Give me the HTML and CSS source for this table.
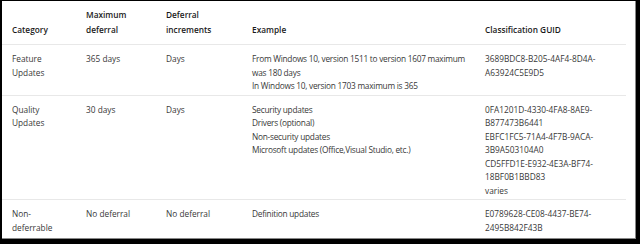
FILE: index.html
```html
<!DOCTYPE html>
<html lang="en">
  <head>
    <meta charset="UTF-8" />
    <title>Deferral policies</title>
    <link rel="stylesheet" href="styles.css">
  </head>
  <body>
    <div class="panel">
      <table class="deferral-table">
        <colgroup>
          <col class="col-category" />
          <col class="col-max" />
          <col class="col-incr" />
          <col class="col-example" />
          <col class="col-guid" />
        </colgroup>
        <thead>
          <tr>
            <th>Category</th>
            <th>Maximum deferral</th>
            <th>Deferral increments</th>
            <th>Example</th>
            <th>Classification GUID</th>
          </tr>
        </thead>
        <tbody>
          <tr>
            <td>Feature Updates</td>
            <td>365 days</td>
            <td>Days</td>
            <td class="example">
              From Windows 10, version 1511 to version 1607 maximum<br />
              was 180 days<br />
              In Windows 10, version 1703 maximum is 365
            </td>
            <td>3689BDC8-B205-4AF4-8D4A-A63924C5E9D5</td>
          </tr>
          <tr>
            <td>Quality Updates</td>
            <td>30 days</td>
            <td>Days</td>
            <td class="example">
              Security updates<br />
              Drivers (optional)<br />
              Non-security updates<br />
              Microsoft updates (Office,Visual Studio, etc.)
            </td>
            <td>
              0FA1201D-4330-4FA8-8AE9-B877473B6441<br />
              EBFC1FC5-71A4-4F7B-9ACA-3B9A503104A0<br />
              CD5FFD1E-E932-4E3A-BF74-18BF0B1BBD83<br />
              varies
            </td>
          </tr>
          <tr>
            <td>Non-deferrable</td>
            <td>No deferral</td>
            <td>No deferral</td>
            <td class="example">Definition updates</td>
            <td>E0789628-CE08-4437-BE74-2495B842F43B</td>
          </tr>
        </tbody>
      </table>
    </div>
  </body>
</html>
```

FILE: styles.css
```css
html {
  background: #000;
}

body {
  margin: 0;
  padding: 1px 4px 5px 2px;
  font-family: "Open Sans", "Noto Sans", Arial, sans-serif;
  font-size: 8.3px;
  color: #383838;
}

.panel {
  background: #fff;
  height: 238px;
  border-right: 1px solid #888;
  border-bottom: 1px solid #888;
  box-sizing: border-box;
}

.deferral-table {
  width: 624px;
  border-collapse: collapse;
  table-layout: fixed;
  line-height: 13.5px;
}

.col-category {
  width: 74px;
}

.col-max {
  width: 80px;
}

.col-incr {
  width: 86px;
}

.col-example {
  width: 233px;
}

th {
  text-align: left;
  vertical-align: bottom;
  font-weight: 600;
  color: #1a1a1a;
  padding: 0 8px 7px 10px;
  height: 36px;
  line-height: 15px;
  border-bottom: 1px solid #e8e8e8;
}

td {
  vertical-align: top;
  padding: 7px 10px 2px 10px;
  border-bottom: 1px solid #e8e8e8;
}

td.example {
  white-space: nowrap;
  letter-spacing: -0.25px;
}

tbody tr:last-child td {
  border-bottom: none;
}
```
